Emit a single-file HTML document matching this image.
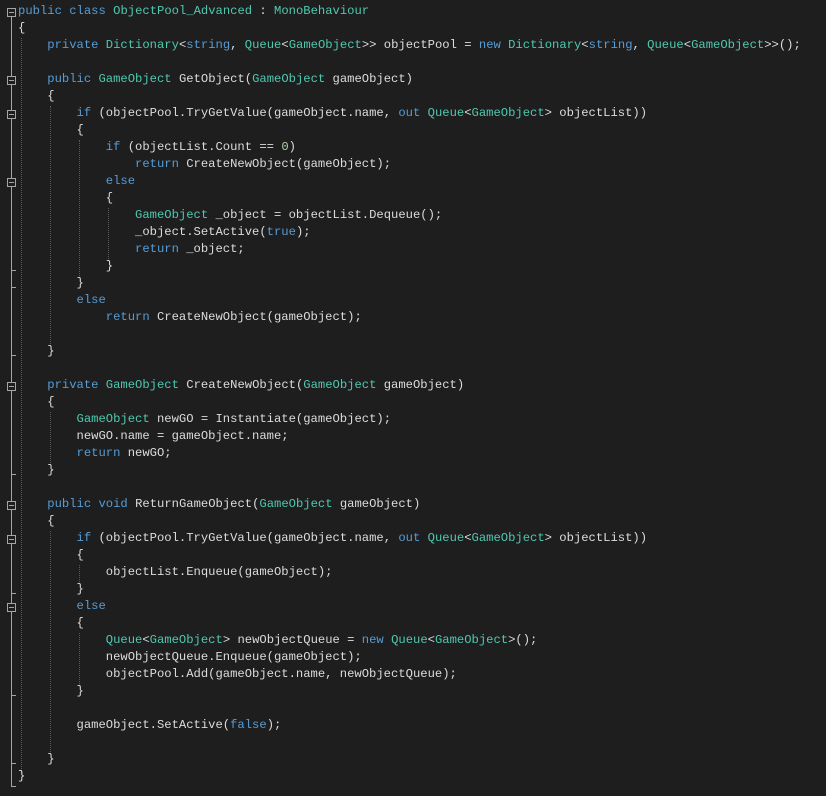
<!DOCTYPE html>
<html><head><meta charset="utf-8"><style>
html,body{margin:0;padding:0;background:#1e1e1e;width:826px;height:796px;overflow:hidden;position:relative}
pre{position:absolute;left:18px;top:3px;margin:0;font-family:"Liberation Mono",monospace;font-size:12.2px;line-height:17px;color:#dcdcdc}
.k{color:#569cd6}.t{color:#4ec9b0}.n{color:#b5cea8}
.g{position:absolute;width:0;border-left:1px dotted #5a5a5a}
.b{position:absolute;left:7px;width:7px;height:7px;border:1px solid #a5a5a5;background:#1e1e1e}
.b:after{content:"";position:absolute;left:1px;top:3px;width:5px;height:1px;background:#a5a5a5}
.v{position:absolute;left:11px;width:1px;background:#a5a5a5}
.h{position:absolute;left:11px;width:5px;height:1px;background:#a5a5a5}
</style></head><body>
<div class="v" style="top:17px;height:770px"></div>
<div class="b" style="top:8px"></div>
<div class="b" style="top:76px"></div>
<div class="b" style="top:110px"></div>
<div class="b" style="top:178px"></div>
<div class="b" style="top:382px"></div>
<div class="b" style="top:501px"></div>
<div class="b" style="top:535px"></div>
<div class="b" style="top:603px"></div>
<div class="h" style="top:287px"></div>
<div class="h" style="top:270px"></div>
<div class="h" style="top:355px"></div>
<div class="h" style="top:474px"></div>
<div class="h" style="top:593px"></div>
<div class="h" style="top:695px"></div>
<div class="h" style="top:763px"></div>
<div class="h" style="top:786px"></div>
<div class="g" style="left:21px;top:38px;height:735px"></div>
<div class="g" style="left:50px;top:106px;height:240px"></div>
<div class="g" style="left:50px;top:412px;height:53px"></div>
<div class="g" style="left:50px;top:531px;height:223px"></div>
<div class="g" style="left:79px;top:140px;height:138px"></div>
<div class="g" style="left:79px;top:565px;height:19px"></div>
<div class="g" style="left:79px;top:633px;height:53px"></div>
<div class="g" style="left:108px;top:208px;height:53px"></div>
<pre><span class="k">public</span> <span class="k">class</span> <span class="t">ObjectPool_Advanced</span> : <span class="t">MonoBehaviour</span>
{
    <span class="k">private</span> <span class="t">Dictionary</span>&lt;<span class="k">string</span>, <span class="t">Queue</span>&lt;<span class="t">GameObject</span>&gt;&gt; objectPool = <span class="k">new</span> <span class="t">Dictionary</span>&lt;<span class="k">string</span>, <span class="t">Queue</span>&lt;<span class="t">GameObject</span>&gt;&gt;();

    <span class="k">public</span> <span class="t">GameObject</span> GetObject(<span class="t">GameObject</span> gameObject)
    {
        <span class="k">if</span> (objectPool.TryGetValue(gameObject.name, <span class="k">out</span> <span class="t">Queue</span>&lt;<span class="t">GameObject</span>&gt; objectList))
        {
            <span class="k">if</span> (objectList.Count == <span class="n">0</span>)
                <span class="k">return</span> CreateNewObject(gameObject);
            <span class="k">else</span>
            {
                <span class="t">GameObject</span> _object = objectList.Dequeue();
                _object.SetActive(<span class="k">true</span>);
                <span class="k">return</span> _object;
            }
        }
        <span class="k">else</span>
            <span class="k">return</span> CreateNewObject(gameObject);

    }

    <span class="k">private</span> <span class="t">GameObject</span> CreateNewObject(<span class="t">GameObject</span> gameObject)
    {
        <span class="t">GameObject</span> newGO = Instantiate(gameObject);
        newGO.name = gameObject.name;
        <span class="k">return</span> newGO;
    }

    <span class="k">public</span> <span class="k">void</span> ReturnGameObject(<span class="t">GameObject</span> gameObject)
    {
        <span class="k">if</span> (objectPool.TryGetValue(gameObject.name, <span class="k">out</span> <span class="t">Queue</span>&lt;<span class="t">GameObject</span>&gt; objectList))
        {
            objectList.Enqueue(gameObject);
        }
        <span class="k">else</span>
        {
            <span class="t">Queue</span>&lt;<span class="t">GameObject</span>&gt; newObjectQueue = <span class="k">new</span> <span class="t">Queue</span>&lt;<span class="t">GameObject</span>&gt;();
            newObjectQueue.Enqueue(gameObject);
            objectPool.Add(gameObject.name, newObjectQueue);
        }

        gameObject.SetActive(<span class="k">false</span>);

    }
}</pre>
</body></html>
